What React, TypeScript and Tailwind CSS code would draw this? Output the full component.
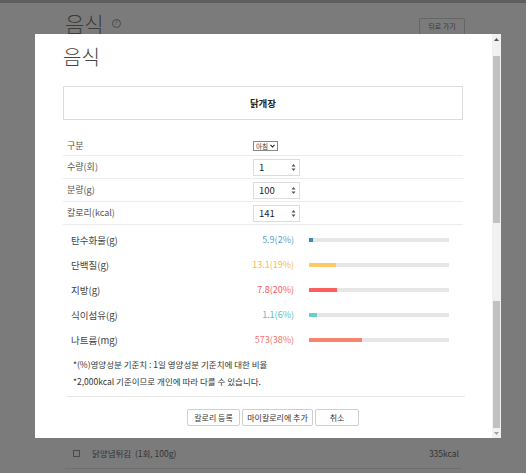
const font = { fontFamily: '"Noto Sans CJK KR", "Noto Sans", sans-serif' };

type Nutrient = { label: string; value: string; pct: number; text: string; fill: string };

const nutrients: Nutrient[] = [
  { label: '탄수화물(g)', value: '5.9(2%)', pct: 2, text: 'text-[#5b9fcc]', fill: 'bg-[#3f8bb8]' },
  { label: '단백질(g)', value: '13.1(19%)', pct: 19, text: 'text-[#f7b955]', fill: 'bg-[#ffc966]' },
  { label: '지방(g)', value: '7.8(20%)', pct: 20, text: 'text-[#f25c5c]', fill: 'bg-[#ff5e5e]' },
  { label: '식이섬유(g)', value: '1.1(6%)', pct: 6, text: 'text-[#55c4c0]', fill: 'bg-[#66d0c8]' },
  { label: '나트륨(mg)', value: '573(38%)', pct: 38, text: 'text-[#f47466]', fill: 'bg-[#f7846f]' },
];

function Spinner() {
  return (
    <svg width="5" height="9" viewBox="0 0 5 9" className="shrink-0">
      <path d="M2.5 1 L4.5 3.5 L0.5 3.5 Z" fill="#555" />
      <path d="M2.5 8 L4.5 5.5 L0.5 5.5 Z" fill="#555" />
    </svg>
  );
}

function NumberBox({ value }: { value: string }) {
  return (
    <div className="flex h-[17px] w-[47px] items-center justify-between border border-[#dcdcdc] bg-white pl-[5px] pr-[3px]">
      <span className="text-[9.5px] text-[#222]">{value}</span>
      <Spinner />
    </div>
  );
}

function FormRow({ label, children, first }: { label: string; children: React.ReactNode; first?: boolean }) {
  return (
    <div className={`flex items-center border-b border-[#ececec] ${first ? 'h-[19px]' : 'h-[23px]'}`}>
      <div className="w-[190px] pl-[4px] text-[9px] text-[#555]">{label}</div>
      {children}
    </div>
  );
}

export default function App() {
  return (
    <div className="relative h-[473px] w-[526px] overflow-hidden border-t-[3px] border-[#5e5e5e] bg-[#7b7b7b]" style={font}>
      {/* page underneath */}
      <div className="flex items-start justify-between pl-[65px] pr-[61px] pt-[6px]">
        <div className="flex items-center gap-[8px]">
          <span className="text-[21px] font-light leading-[28px] text-[#3c3c3c]">음식</span>
          <span className="flex h-[9px] w-[9px] items-center justify-center rounded-full border border-[#4a4a4a] text-[6px] leading-none text-[#4a4a4a]">?</span>
        </div>
        <div className="mt-[9px] flex h-[17px] w-[46px] items-center justify-center rounded-[2px] border border-[#666] text-[7px] text-[#3a3a3a]">
          뒤로 가기
        </div>
      </div>

      <div className="mx-[65px] mt-[402px] flex h-[30px] items-center border-b border-[#6f6f6f] pl-[8px] pr-[2px] text-[8.5px] text-[#333]">
        <span className="h-[7px] w-[7px] border border-[#4a4a4a]" />
        <span className="ml-[12px] flex-1">닭양념튀김&nbsp;&nbsp;(1회, 100g)</span>
        <span>335kcal</span>
      </div>

      {/* modal */}
      <div className="absolute left-[35px] top-[31px] flex h-[404px] w-[466px] bg-white">
        <div className="flex-1 pl-[28px] pr-[7px]">
          <div className="pt-[9px] text-[20px] font-light leading-[28px] text-[#444]">음식</div>

          <div className="mt-[15px] flex h-[34px] w-[400px] items-center justify-center border border-[#dcdcdc] text-[9.5px] font-bold text-[#222]">
            닭개장
          </div>

          <div className="mt-[17px] w-[400px]">
            <FormRow label="구분" first>
              <div className="flex h-[10px] items-center gap-[2px] border border-[#888] px-[2px] text-[6.5px] leading-none text-[#333]">
                아침
                <svg width="5" height="4" viewBox="0 0 5 4">
                  <path d="M0.5 0.8 L2.5 3 L4.5 0.8" fill="none" stroke="#222" strokeWidth="1.1" />
                </svg>
              </div>
            </FormRow>
            <FormRow label="수량(회)">
              <NumberBox value="1" />
            </FormRow>
            <FormRow label="분량(g)">
              <NumberBox value="100" />
            </FormRow>
            <FormRow label="칼로리(kcal)">
              <NumberBox value="141" />
            </FormRow>
          </div>

          <div className="mt-[7px] flex flex-col gap-[9px] pl-[8px]">
            {nutrients.map((n) => (
              <div key={n.label} className="flex h-[16px] items-center">
                <span className="w-[132px] text-[9.5px] text-[#444]">{n.label}</span>
                <span className={`w-[91px] text-right text-[9px] ${n.text}`}>{n.value}</span>
                <div className="ml-[15px] h-[4px] w-[140px] bg-[#e6e6e6]">
                  <div className={`h-full ${n.fill}`} style={{ width: `${Math.max(n.pct, 2.5)}%` }} />
                </div>
              </div>
            ))}
          </div>

          <div className="mt-[8px] pl-[10px] text-[8.5px] leading-[17px] text-[#333]">
            <p>*(%)영양성분 기준치 : 1일 영양성분 기준치에 대한 비율</p>
            <p>*2,000kcal 기준이므로 개인에 따라 다를 수 있습니다.</p>
          </div>

          <div className="ml-[3px] mt-[6px] w-[399px] border-t border-[#e6e6e6]" />

          <div className="mt-[12px] flex justify-center gap-[2px] pr-[2px]">
            <button className="h-[17px] w-[53px] rounded-[2px] border border-[#cfcfcf] bg-white text-[8px] text-[#333]">칼로리 등록</button>
            <button className="h-[17px] w-[71px] rounded-[2px] border border-[#cfcfcf] bg-white text-[8px] text-[#333]">마이칼로리에 추가</button>
            <button className="h-[17px] w-[44px] rounded-[2px] border border-[#cfcfcf] bg-white text-[8px] text-[#333]">취소</button>
          </div>
        </div>

        {/* scrollbar */}
        <div className="flex w-[9px] flex-col bg-[#f1f1f1]">
          <div className="flex h-[10px] items-center justify-center">
            <svg width="5" height="3" viewBox="0 0 5 3"><path d="M2.5 0 L5 3 L0 3 Z" fill="#555" /></svg>
          </div>
          <div className="mx-[1px] mt-[12px] h-[167px] bg-[#c1c1c1]" />
          <div className="h-[78px]" />
          <div className="mx-[1px] h-[127px] bg-[#c1c1c1]" />
          <div className="flex flex-1 items-center justify-center">
            <svg width="5" height="3" viewBox="0 0 5 3"><path d="M0 0 L5 0 L2.5 3 Z" fill="#a0a0a0" /></svg>
          </div>
        </div>
      </div>
    </div>
  );
}
